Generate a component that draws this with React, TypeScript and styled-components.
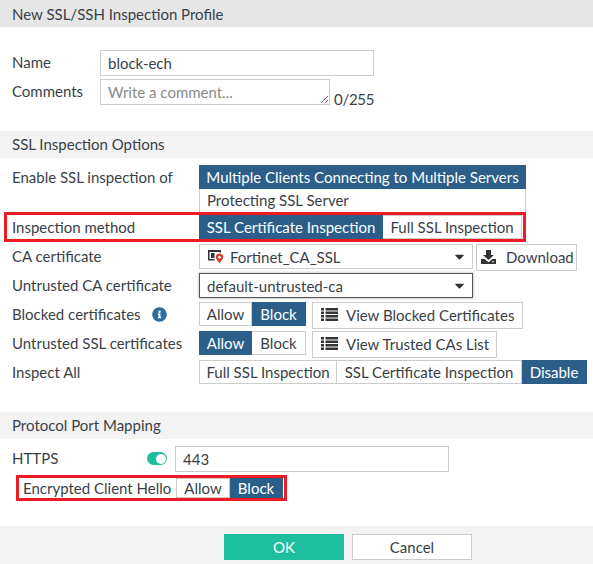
import styled, { createGlobalStyle } from 'styled-components'
import { FaCaretDown, FaInfoCircle } from 'react-icons/fa'

const GlobalStyle = createGlobalStyle`
  html, body {
    margin: 0;
    padding: 0;
    background: #ffffff;
  }
  body {
    font-family: Lato, "Open Sans", sans-serif;
    font-size: 15px;
    color: #3a3f47;
  }
  * {
    box-sizing: border-box;
  }
`

function CertIcon() {
  return (
    <svg width="16" height="13" viewBox="0 0 16 13" aria-hidden="true">
      <path d="M0 0h13v2.5h-1.5v-0.5h-10v7h5v1.5h-6.500z" fill="#333" />
      <path d="M3 3h3.500v5h-3.500z" fill="#333" />
      <path d="M11.500 3.500a3.700 3.700 0 0 1 3.700 3.700c0 2.100-3.700 5.800-3.700 5.800s-3.700-3.700-3.700-5.800a3.700 3.700 0 0 1 3.700-3.700z" fill="#d9412e" />
      <circle cx="11.500" cy="7.200" r="1.300" fill="#fff" />
    </svg>
  )
}

function ListIcon() {
  return (
    <svg width="17" height="13" viewBox="0 0 17 13" aria-hidden="true">
      <path d="M0 0h3v2.500h-3zM4.500 0h12.500v2.500h-12.500zM0 3.500h3v2.500h-3zM4.500 3.500h12.500v2.500h-12.500zM0 7h3v2.500h-3zM4.500 7h12.500v2.500h-12.500zM0 10.500h3v2.500h-3zM4.500 10.500h12.500v2.500h-12.500z" fill="#333" />
    </svg>
  )
}

function DownloadIcon() {
  return (
    <svg width="15" height="14" viewBox="0 0 15 14" aria-hidden="true">
      <path d="M5 0h5v5h3l-5.500 5-5.500-5h3z" fill="#333" />
      <path d="M0 9h3.500l4 3.300 4-3.300h3.500v5h-15z" fill="#333" />
      <circle cx="12" cy="11.700" r="0.800" fill="#fff" />
    </svg>
  )
}

function Caret() {
  return (
    <CaretWrap>
      <FaCaretDown size={15} />
    </CaretWrap>
  )
}

export default function App() {
  return (
    <Page>
      <GlobalStyle />
      <PageTitle>New SSL/SSH Inspection Profile</PageTitle>

      <NameBlock>
        <FormRow>
          <Label $width={88}>Name</Label>
          <TextInput $width={274} value="block-ech" readOnly />
        </FormRow>
        <CommentRow>
          <CommentLabel>Comments</CommentLabel>
          <CommentBox placeholder="Write a comment..." />
          <Counter>0/255</Counter>
        </CommentRow>
      </NameBlock>

      <SectionTitle>SSL Inspection Options</SectionTitle>

      <OptionsBlock>
        <EnableRow>
          <Label>Enable SSL inspection of</Label>
          <StackedOptions>
            <Segment $active>Multiple Clients Connecting to Multiple Servers</Segment>
            <StackedOption>Protecting SSL Server</StackedOption>
          </StackedOptions>
        </EnableRow>

        <HighlightRow>
          <HighlightLabel>Inspection method</HighlightLabel>
          <SegmentGroup>
            <Segment $active $width={184}>SSL Certificate Inspection</Segment>
            <Segment $width={139}>Full SSL Inspection</Segment>
          </SegmentGroup>
        </HighlightRow>

        <FormRow>
          <Label>CA certificate</Label>
          <Select>
            <SelectValue>
              <CertIcon />
              Fortinet_CA_SSL
            </SelectValue>
            <Caret />
          </Select>
          <DownloadButton $width={101}>
            <DownloadIcon />
            Download
          </DownloadButton>
        </FormRow>

        <FormRow>
          <Label>Untrusted CA certificate</Label>
          <Select $focused>
            <SelectValue>default-untrusted-ca</SelectValue>
            <Caret />
          </Select>
        </FormRow>

        <FormRow>
          <Label>
            Blocked certificates
            <InfoIcon>
              <FaInfoCircle size={15} />
            </InfoIcon>
          </Label>
          <SegmentGroup>
            <Segment $width={53}>Allow</Segment>
            <Segment $active $width={54}>Block</Segment>
          </SegmentGroup>
          <ActionButton $width={211}>
            <ListIcon />
            View Blocked Certificates
          </ActionButton>
        </FormRow>

        <FormRow>
          <Label>Untrusted SSL certificates</Label>
          <SegmentGroup>
            <Segment $active $width={53}>Allow</Segment>
            <Segment $width={54}>Block</Segment>
          </SegmentGroup>
          <ActionButton $width={185}>
            <ListIcon />
            View Trusted CAs List
          </ActionButton>
        </FormRow>

        <FormRow>
          <Label>Inspect All</Label>
          <SegmentGroup>
            <Segment $width={138}>Full SSL Inspection</Segment>
            <Segment $width={185}>SSL Certificate Inspection</Segment>
            <Segment $active $width={65}>Disable</Segment>
          </SegmentGroup>
        </FormRow>
      </OptionsBlock>

      <SectionTitle>Protocol Port Mapping</SectionTitle>

      <PortBlock>
        <FormRow>
          <Label $width={135}>HTTPS</Label>
          <Toggle />
          <TextInput $width={274} value="443" readOnly />
        </FormRow>
        <EchHighlight>
          <EchLabel>Encrypted Client Hello</EchLabel>
          <SegmentGroup $height={20}>
            <Segment $width={54} $height={20}>Allow</Segment>
            <Segment $active $width={53} $height={20}>Block</Segment>
          </SegmentGroup>
        </EchHighlight>
      </PortBlock>

      <Footer>
        <OkButton>OK</OkButton>
        <CancelButton>Cancel</CancelButton>
      </Footer>
    </Page>
  )
}

const Page = styled.div`
  width: 593px;
  height: 564px;
  overflow: hidden;
  background: #ffffff;
`

const PageTitle = styled.div`
  height: 27px;
  line-height: 29px;
  padding-left: 12px;
  background: #e6e6e6;
`

const SectionTitle = styled.div`
  height: 27px;
  line-height: 27px;
  padding-left: 12px;
  background: #f3f3f3;
`

const NameBlock = styled.div`
  padding: 23px 0 26px;
  display: flex;
  flex-direction: column;
  gap: 3px;
`

const OptionsBlock = styled.div`
  padding: 7px 0 26px;
  display: flex;
  flex-direction: column;
  gap: 3px;
`

const PortBlock = styled.div`
  padding: 7px 0 25px;
  display: flex;
  flex-direction: column;
  gap: 3px;
`

const FormRow = styled.div`
  display: flex;
  align-items: flex-start;
  padding-left: 12px;
  height: 26px;
`

const EnableRow = styled(FormRow)`
  height: 48px;
`

const CommentRow = styled(FormRow)`
  align-items: flex-end;
`

const Label = styled.label<{ $width?: number }>`
  width: ${({ $width }) => $width ?? 187}px;
  flex: none;
  display: flex;
  align-items: center;
  height: 24px;
  white-space: nowrap;
`

const CommentLabel = styled(Label)`
  width: 88px;
  align-self: flex-start;
`

const TextInput = styled.input<{ $width: number }>`
  width: ${({ $width }) => $width}px;
  height: 26px;
  border: 1px solid #cccccc;
  padding: 0 7px;
  font: inherit;
  color: inherit;
  outline: none;
  background: #ffffff;
`

const CommentBox = styled.textarea`
  width: 230px;
  height: 26px;
  border: 1px solid #cccccc;
  padding: 3px 7px 0;
  font: inherit;
  color: inherit;
  outline: none;
  display: block;
  &::placeholder {
    color: #8a8a8a;
    opacity: 1;
  }
`

const Counter = styled.span`
  margin-left: 4px;
  line-height: 12px;
  letter-spacing: -0.3px;
`

const StackedOptions = styled.div`
  width: 327px;
  display: flex;
  flex-direction: column;
`

const StackedOption = styled.div`
  height: 24px;
  line-height: 22px;
  padding-left: 7px;
  border: solid #cccccc;
  border-width: 0 1px 1px 1px;
`

const SegmentGroup = styled.div<{ $height?: number }>`
  display: flex;
  height: ${({ $height }) => $height ?? 24}px;
`

const Segment = styled.div<{ $active?: boolean; $width?: number; $height?: number }>`
  ${({ $width }) => ($width ? `width: ${$width}px;` : '')}
  height: ${({ $height }) => $height ?? 24}px;
  display: flex;
  align-items: center;
  justify-content: center;
  white-space: nowrap;
  background: ${({ $active }) => ($active ? '#2b5f8a' : '#ffffff')};
  color: ${({ $active }) => ($active ? '#ffffff' : 'inherit')};
  border: 1px solid ${({ $active }) => ($active ? '#2b5f8a' : '#cccccc')};
  & + & {
    border-left-width: 0;
  }
`

const HighlightRow = styled.div`
  display: flex;
  align-items: center;
  width: 522px;
  height: 30px;
  margin: -4px 0 -1px 4px;
  border: 3px solid #ed1c24;
`

const HighlightLabel = styled(Label)`
  width: 192px;
  padding-left: 5px;
`

const EchHighlight = styled.div`
  display: flex;
  align-items: center;
  width: 271px;
  height: 26px;
  margin-left: 16px;
  border: 3px solid #ed1c24;
`

const EchLabel = styled.span`
  width: 157px;
  flex: none;
  padding-left: 4px;
  white-space: nowrap;
`

const Select = styled.div<{ $focused?: boolean }>`
  width: 274px;
  height: 25px;
  flex: none;
  display: flex;
  align-items: center;
  justify-content: space-between;
  padding: 0 5px 0 7px;
  background: #ffffff;
  border: 1px solid ${({ $focused }) => ($focused ? '#555555' : '#cccccc')};
  ${({ $focused }) => ($focused ? 'box-shadow: 0 0 3px rgba(0, 0, 0, 0.35);' : '')}
`

const SelectValue = styled.span`
  display: flex;
  align-items: center;
  gap: 6px;
  white-space: nowrap;
  svg {
    margin-left: 1px;
  }
`

const CaretWrap = styled.span`
  display: flex;
  color: #333333;
`

const ActionButton = styled.div<{ $width: number }>`
  width: ${({ $width }) => $width}px;
  height: 27px;
  flex: none;
  margin-left: 6px;
  display: flex;
  align-items: center;
  gap: 8px;
  padding: 0 0 2px 8px;
  border: 1px solid #cccccc;
  background: #ffffff;
  white-space: nowrap;
`

const DownloadButton = styled(ActionButton)`
  margin-left: 3px;
  padding-left: 4px;
  gap: 10px;
`

const InfoIcon = styled.span`
  display: inline-flex;
  margin-left: 11px;
  color: #2b6ca3;
`

const Toggle = styled.span`
  width: 20px;
  height: 13px;
  margin: 6px 8px 0 0;
  flex: none;
  border-radius: 7px;
  background: #1dbf9e;
  position: relative;
  &::after {
    content: '';
    position: absolute;
    right: 1px;
    top: 1.5px;
    width: 10px;
    height: 10px;
    border-radius: 50%;
    background: #ffffff;
  }
`

const Footer = styled.div`
  height: 38px;
  background: #f3f3f3;
  padding-top: 8px;
  padding-left: 224px;
  display: flex;
  gap: 8px;
`

const OkButton = styled.div`
  width: 120px;
  height: 26px;
  line-height: 27px;
  text-align: center;
  background: #1dbf9e;
  color: #ffffff;
`

const CancelButton = styled.div`
  width: 120px;
  height: 26px;
  line-height: 25px;
  text-align: center;
  background: #ffffff;
  border: 1px solid #cccccc;
`
